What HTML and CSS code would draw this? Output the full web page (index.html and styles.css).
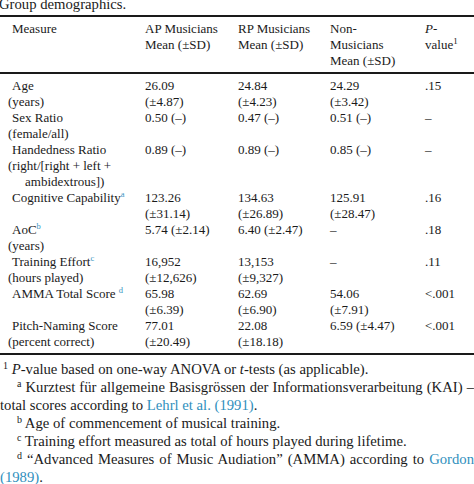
FILE: index.html
```html
<!DOCTYPE html>
<html>
<head>
<meta charset="utf-8">
<link rel="stylesheet" href="styles.css">
</head>
<body>
<div class="title">Group demographics.</div>
<table class="demo">
  <colgroup>
    <col class="c1"><col class="c2"><col class="c3"><col class="c4"><col class="c5">
  </colgroup>
  <thead>
    <tr>
      <th class="measure">Measure</th>
      <th>AP Musicians<br>Mean (±SD)</th>
      <th>RP Musicians<br>Mean (±SD)</th>
      <th>Non-<br>Musicians<br>Mean (±SD)</th>
      <th><i>P</i>-<br>value<sup class="one">1</sup></th>
    </tr>
  </thead>
  <tbody>
    <tr class="first">
      <td class="measure">Age<br>(years)</td>
      <td>26.09<br>(±4.87)</td>
      <td>24.84<br>(±4.23)</td>
      <td>24.29<br>(±3.42)</td>
      <td>.15</td>
    </tr>
    <tr>
      <td class="measure">Sex Ratio<br>(female/all)</td>
      <td>0.50 (–)</td>
      <td>0.47 (–)</td>
      <td>0.51 (–)</td>
      <td>–</td>
    </tr>
    <tr>
      <td class="measure">Handedness Ratio<br>(right/[right + left +<span class="cont">ambidextrous])</span></td>
      <td>0.89 (–)</td>
      <td>0.89 (–)</td>
      <td>0.85 (–)</td>
      <td>–</td>
    </tr>
    <tr>
      <td class="measure">Cognitive Capability<sup class="ref">a</sup></td>
      <td>123.26<br>(±31.14)</td>
      <td>134.63<br>(±26.89)</td>
      <td>125.91<br>(±28.47)</td>
      <td>.16</td>
    </tr>
    <tr>
      <td class="measure">AoC<sup class="ref">b</sup><br>(years)</td>
      <td>5.74 (±2.14)</td>
      <td>6.40 (±2.47)</td>
      <td>–</td>
      <td>.18</td>
    </tr>
    <tr>
      <td class="measure">Training Effort<sup class="ref">c</sup><br>(hours played)</td>
      <td>16,952<br>(±12,626)</td>
      <td>13,153<br>(±9,327)</td>
      <td>–</td>
      <td>.11</td>
    </tr>
    <tr>
      <td class="measure">AMMA Total Score <sup class="ref">d</sup></td>
      <td>65.98<br>(±6.39)</td>
      <td>62.69<br>(±6.90)</td>
      <td>54.06<br>(±7.91)</td>
      <td>&lt;.001</td>
    </tr>
    <tr class="last">
      <td class="measure">Pitch-Naming Score<br>(percent correct)</td>
      <td>77.01<br>(±20.49)</td>
      <td>22.08<br>(±18.18)</td>
      <td>6.59 (±4.47)</td>
      <td>&lt;.001</td>
    </tr>
  </tbody>
</table>
<div class="notes">
  <p class="note n1"><sup class="mk">1</sup> <i>P</i>-value based on one-way ANOVA or <i>t</i>-tests (as applicable).</p>
  <p class="note"><sup class="mk">a</sup> Kurztest für allgemeine Basisgrössen der Informationsverarbeitung (KAI) – total scores according to <span class="link">Lehrl et al. (1991)</span>.</p>
  <p class="note"><sup class="mk">b</sup> Age of commencement of musical training.</p>
  <p class="note"><sup class="mk">c</sup> Training effort measured as total of hours played during lifetime.</p>
  <p class="note"><sup class="mk">d</sup> “Advanced Measures of Music Audiation” (AMMA) according to <span class="link">Gordon (1989)</span>.</p>
</div>
</body>
</html>
```

FILE: styles.css
```css
html, body {
  margin: 0;
  padding: 0;
  background: #ffffff;
}
body {
  width: 474px;
  overflow: hidden;
  color: #1a1a1a;
  font-family: "Liberation Serif", "Times New Roman", serif;
}
.title {
  font-size: 14.7px;
  line-height: 18px;
  margin-top: -5px;
  margin-bottom: 2px;
  margin-left: -1px;
}
.demo {
  width: 474px;
  table-layout: fixed;
  border-collapse: separate;
  border-spacing: 0;
  font-size: 13px;
  line-height: 16px;
}
.c1 { width: 145px; }
.c2 { width: 93px; }
.c3 { width: 92px; }
.c4 { width: 95px; }
.c5 { width: 49px; }
.demo th, .demo td {
  padding: 0;
  text-align: left;
  vertical-align: top;
  font-weight: normal;
}
.demo th {
  border-top: 2px solid #1a1a1a;
  border-bottom: 2px solid #1a1a1a;
  padding-top: 4px;
  padding-bottom: 3px;
}
.demo .measure {
  padding-left: 8px;
  text-indent: 4px;
}
.demo .cont {
  display: block;
  padding-left: 13px;
}
.demo tr.first td { padding-top: 4px; }
.demo tr.last td {
  padding-bottom: 3px;
  border-bottom: 2px solid #1a1a1a;
}
sup {
  line-height: 0;
}
.one {
  font-size: 9px;
  vertical-align: 5px;
}
.ref {
  font-size: 8.5px;
  vertical-align: 5px;
  color: #3a95c2;
}
.notes {
  padding-top: 5px;
  font-size: 14.7px;
  line-height: 18px;
}
.note {
  margin: 0;
  text-align: justify;
  text-indent: 17px;
}
.note.n1 {
  text-indent: 3px;
}
.mk {
  font-size: 10px;
  vertical-align: 5px;
}
.link {
  color: #2f8fbd;
}
```
